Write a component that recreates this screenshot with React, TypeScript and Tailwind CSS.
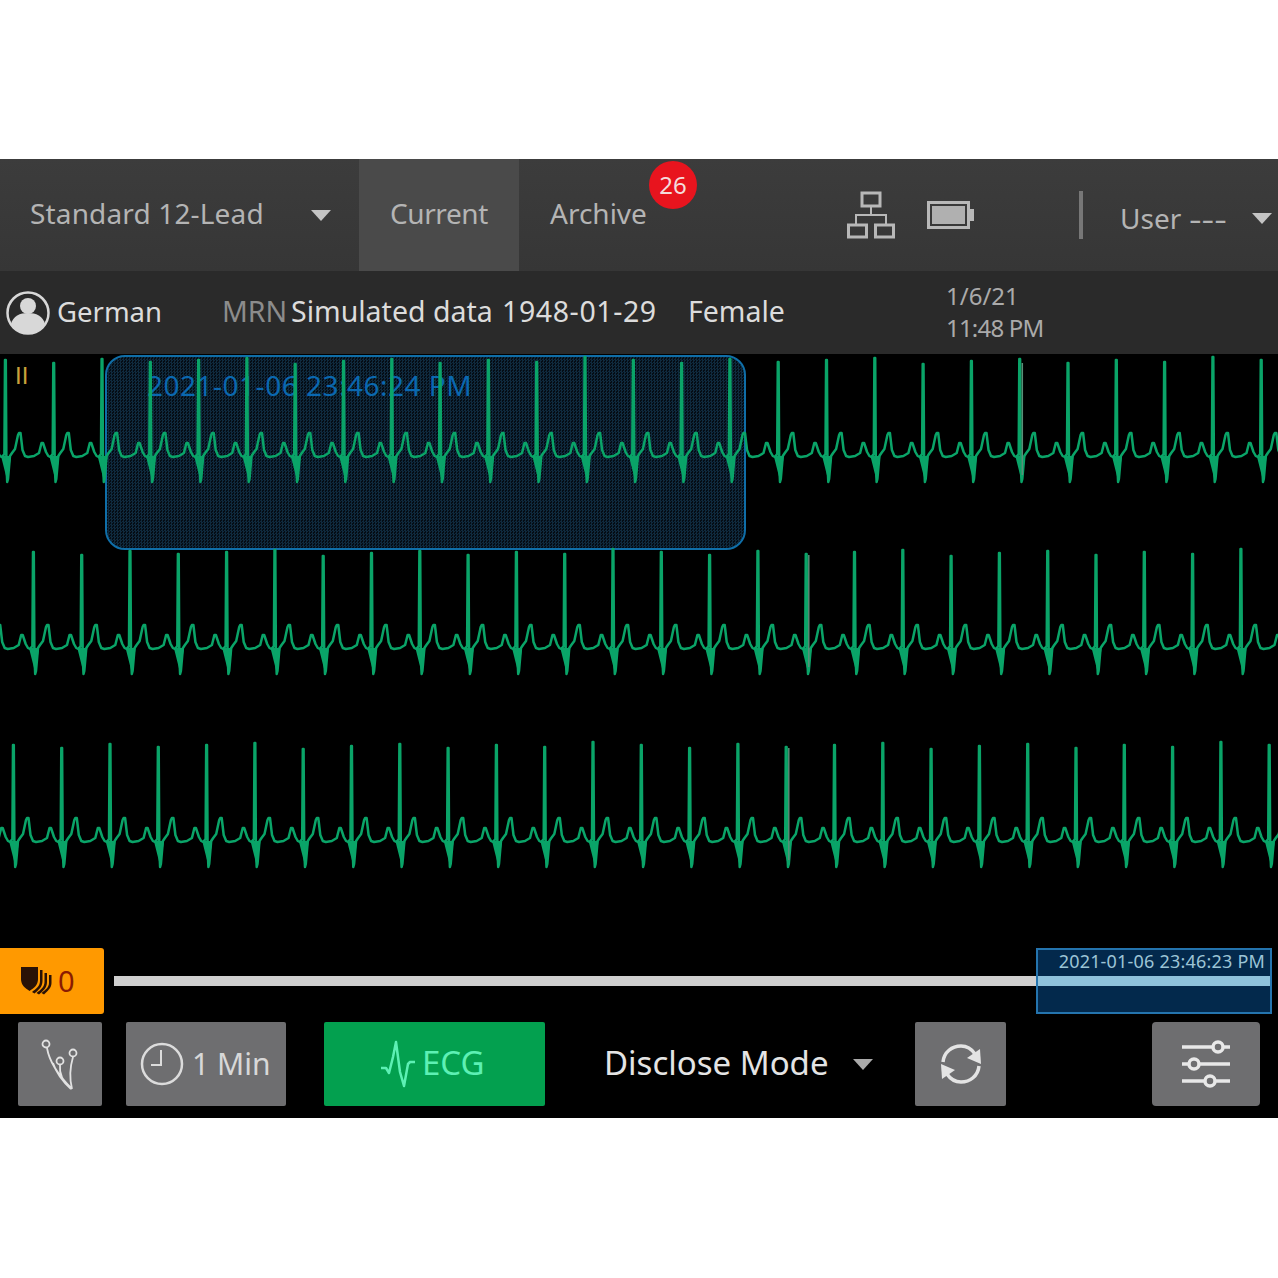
import React from "react";

// one heartbeat, offsets from the R peak: [dx, dy from baseline]
const BEAT: [number, number][] = [
  [-5, 1],
  [-3, 2],
  [-0.6, -1],
  [0, -95],
  [0.8, -95],
  [1.4, 8],
  [2.2, 27],
  [3, 24],
  [5, 1],
  [7, -2],
  [10, -6],
  [13, -20],
  [14, -22],
  [15.5, -22],
  [17.5, -5],
  [20, 1],
  [23, 2],
  [29, 1],
  [34, -2],
  [36.5, -12],
  [38, -12],
  [41, -3],
];

const PERIOD = 48.3;
const JITTER = [0, 3, -1, 2, 0, -2, 4, 1, -1, 3, 0, 2, -3];

function tracePath(start: number, baseline: number) {
  let d = "";
  for (let k = -1; k < 28; k++) {
    const rx = start + k * PERIOD;
    const lift = JITTER[(k + 13) % 13];
    BEAT.forEach(([dx, dy]) => {
      const y = dy < -50 ? dy + lift : dy;
      d += `${d ? "L" : "M"}${(rx + dx).toFixed(1)} ${baseline + y} `;
    });
  }
  return d;
}

// the thick wedge of the S wave under each R peak
function wedgePath(start: number, baseline: number) {
  let d = "";
  for (let k = -1; k < 28; k++) {
    const rx = start + k * PERIOD;
    d += `M${(rx - 4).toFixed(1)} ${baseline + 1}L${(rx + 6).toFixed(1)} ${baseline + 1}L${(rx + 2.5).toFixed(1)} ${baseline + 27}Z `;
  }
  return d;
}

const ROWS = [
  { start: 5, baseline: 101, extra: 21 },
  { start: 33, baseline: 293, extra: 16 },
  { start: 13, baseline: 486, extra: 16 },
];

function Caret({ className }: { className: string }) {
  return (
    <svg className={className} viewBox="0 0 20 11" fill="currentColor">
      <path d="M0 0h20L10 11z" />
    </svg>
  );
}

function NetworkIcon() {
  return (
    <svg className="w-[48px] h-[48px]" viewBox="0 0 48 48" fill="none" stroke="#b8b8b8" strokeWidth="3">
      <rect x="15" y="2" width="18" height="13" />
      <path d="M24 15v9M9 34v-10h30v10" strokeWidth="2" />
      <rect x="1.5" y="34" width="18" height="12" />
      <rect x="28.5" y="34" width="18" height="12" />
    </svg>
  );
}

function BatteryIcon() {
  return (
    <svg className="w-[48px] h-[28px]" viewBox="0 0 48 28">
      <rect x="1.5" y="1.5" width="40" height="25" fill="none" stroke="#b8b8b8" strokeWidth="3" />
      <rect x="5" y="5" width="33" height="18" fill="#b0b0b0" />
      <rect x="43" y="8" width="4" height="12" fill="#b8b8b8" />
    </svg>
  );
}

function AvatarIcon() {
  return (
    <svg className="w-[44px] h-[44px]" viewBox="0 0 44 44">
      <circle cx="22" cy="22" r="20.5" fill="none" stroke="#d8d8d8" strokeWidth="2.5" />
      <circle cx="22" cy="15" r="8" fill="#d8d8d8" />
      <path d="M5 33c2-8 9-11 17-11s15 3 17 11c-4 6-10 10-17 10S9 39 5 33z" fill="#d8d8d8" />
    </svg>
  );
}

function ShieldsIcon() {
  return (
    <svg className="w-[32px] h-[30px]" viewBox="0 0 32 30" fill="#2a1206">
      <path d="M1 1h17v12c0 6-4 9-8.500 12C5 22 1 19 1 13z" />
      <path d="M20 4h2.500v11c0 6-4 9-8 12.500l-2.500-1.500c4-3 8-6 8-11z" />
      <path d="M24.500 7H27v9c0 6-4 9-8 12.500L16.500 27c4-3 8-6 8-11z" />
      <path d="M29 9h2.500v8c0 5-4 8-7.500 11.500L21.500 27c4-3 7.500-6 7.500-10z" />
    </svg>
  );
}

function LeadsIcon() {
  return (
    <svg className="w-[40px] h-[56px]" viewBox="0 0 40 56" fill="none" stroke="#e2e2e2" strokeWidth="1.800">
      <circle cx="6" cy="8" r="3.500" />
      <circle cx="33" cy="17" r="3.500" />
      <circle cx="20" cy="25" r="3.500" />
      <path d="M7 12c2 12 10 26 25 41M20 29c-1 9 3 17 11 24M33 21c-3 10-4 20-1 32M13 27c3 9 9 18 18 26" />
    </svg>
  );
}

function ClockIcon() {
  return (
    <svg className="w-[44px] h-[44px]" viewBox="0 0 44 44" fill="none" stroke="#dcdcdc">
      <circle cx="22" cy="22" r="20" strokeWidth="2.500" />
      <path d="M21 8v15H11" strokeWidth="2" />
    </svg>
  );
}

function WaveIcon() {
  return (
    <svg className="w-[36px] h-[48px]" viewBox="0 0 36 48" fill="none" stroke="#5df0b4" strokeWidth="2.500" strokeLinejoin="round">
      <path d="M1 28l5 0 3 5 4-16 3-15 4 30 4 14 4-22 2-2 5 0" />
    </svg>
  );
}

function RefreshIcon() {
  return (
    <svg className="w-[42px] h-[40px]" viewBox="0 0 42 40" fill="none" stroke="#e4e4e4" strokeWidth="3.500">
      <path d="M3 18C4 8 12 2 21 2c6 0 10 2 14 8" />
      <path d="M39 22c-1 10-9 16-18 16-6 0-10-2-14-8" />
      <path d="M41 20l-1-15-13 9z" fill="#e4e4e4" stroke="none" />
      <path d="M1 20l1 15 13-9z" fill="#e4e4e4" stroke="none" />
    </svg>
  );
}

function SlidersIcon() {
  return (
    <svg className="w-[50px] h-[48px]" viewBox="0 0 50 48" fill="none" stroke="#e8e8e8" strokeWidth="3.500">
      <path d="M1 7h30M43 7h6M1 24h6M19 24h30M1 41h22M35 41h14" />
      <circle cx="37" cy="7" r="5" />
      <circle cx="13" cy="24" r="5" />
      <circle cx="29" cy="41" r="5" />
    </svg>
  );
}

export default function App() {
  return (
    <div className="w-[1278px] h-[1278px] bg-white pt-[159px] font-['Noto_Sans',sans-serif] overflow-hidden">
      <div className="h-[959px] flex flex-col bg-black">
        {/* Top bar */}
        <div className="h-[112px] flex items-stretch bg-gradient-to-b from-[#3c3c3c] to-[#363636] text-[#b4b4b4] text-[28px]">
          <div className="w-[359px] flex items-center pl-[30px]">
            <span className="w-[281px] pb-[4px] tracking-[0.15px]">Standard 12-Lead</span>
            <Caret className="w-[20px] h-[11px] text-[#c4c4c4]" />
          </div>
          <div className="w-[160px] flex items-center justify-center bg-[#4a4a4a] pb-[4px] tracking-[-0.4px]">Current</div>
          <div className="relative w-[328px] flex items-center pl-[31px] pb-[4px]">
            <span>Archive</span>
            <span className="absolute left-[130px] top-[2px] w-[48px] h-[48px] rounded-full bg-[#e8141e] text-[#f4dcdc] text-[24px] flex items-center justify-center">
              26
            </span>
          </div>
          <div className="w-[80px] flex items-center">
            <NetworkIcon />
          </div>
          <div className="w-[152px] flex items-center">
            <BatteryIcon />
          </div>
          <div className="w-[41px] flex items-center">
            <div className="w-[4px] h-[48px] bg-[#777777]" />
          </div>
          <div className="flex items-center">
            <span className="w-[132px] pt-[6px] whitespace-nowrap">
              User <span className="inline-block origin-left scale-x-[1.4]">---</span>
            </span>
            <Caret className="w-[20px] h-[11px] text-[#c4c4c4] mt-[6px]" />
          </div>
        </div>

        {/* Patient bar */}
        <div className="h-[83px] flex items-center bg-[#2a2a2a] text-[#dcdcdc] text-[28.5px] pl-[6px]">
          <AvatarIcon />
          <span className="ml-[7px] w-[165px] pb-[2px] text-[27.500px]">German</span>
          <span className="w-[69px] text-[#8c8c8c] pb-[2px]">MRN</span>
          <span className="w-[211px] pb-[2px] whitespace-nowrap">Simulated data</span>
          <span className="w-[186px] pb-[2px] tracking-[0.6px]">1948-01-29</span>
          <span className="w-[258px] pb-[2px]">Female</span>
          <div className="text-[24px] leading-[32px] text-[#aaaaaa] pb-[1px]">
            <div>1/6/21</div>
            <div className="tracking-[-0.8px]">11:48 PM</div>
          </div>
        </div>

        {/* Waveforms */}
        <div className="relative flex-1 bg-black">
          <div className="absolute left-[105px] top-[1px] w-[641px] h-[195px] rounded-[20px] border-2 border-[#0f6ea8] bg-[#050c14] bg-[repeating-conic-gradient(#0f2a3e_0%_25%,transparent_0%_50%)] bg-[length:3px_3px] pl-[40px] pt-[7px] text-[28px] tracking-[0.5px] text-[#0a68b0]">
            2021-01-06 23:46:24 PM
          </div>
          <span className="absolute left-[15px] top-[8px] text-[24px] leading-[28px] text-[#c9a13a] font-['Liberation_Sans',sans-serif]">
            II
          </span>
          <svg className="relative block w-full h-full" viewBox="0 0 1278 594" fill="none" stroke="#0aa468" strokeWidth="2.500" strokeLinejoin="round">
            {ROWS.map((r) => (
              <g key={r.start}>
                <path d={wedgePath(r.start, r.baseline)} fill="#0aa468" stroke="none" />
                <path d={tracePath(r.start, r.baseline)} />
                <path
                  d={`M${r.start + r.extra * PERIOD + 3} ${r.baseline - 92}V${r.baseline + 20}`}
                  strokeWidth="1.500"
                  stroke="#5a8f78"
                />
              </g>
            ))}
          </svg>
        </div>

        {/* Timeline */}
        <div className="h-[66px] flex items-center">
          <div className="w-[104px] h-[66px] rounded-r-[3px] bg-[#ff9900] flex items-center pl-[20px] gap-[6px] text-[#8a1c02] text-[29px]">
            <ShieldsIcon />
            <span>0</span>
          </div>
          <div className="flex-1 h-[10px] ml-[10px] bg-[#cfcfcf]" />
          <div className="w-[236px] h-[66px] mr-[6px] border-2 border-[#2474ae] bg-[#03294c] flex flex-col">
            <div className="h-[26px] text-[18px] leading-[22px] tracking-[0.2px] text-[#9cc4d6] text-right pr-[5px] whitespace-nowrap">
              2021-01-06 23:46:23 PM
            </div>
            <div className="h-[10px] bg-[#8fc2dc]" />
          </div>
        </div>

        {/* Controls */}
        <div className="h-[104px] flex pt-[8px] pb-[12px] pl-[18px] text-[#d8d8d8] text-[30px]">
          <div className="w-[84px] rounded-[2px] bg-[#6e6e70] flex items-center justify-center">
            <LeadsIcon />
          </div>
          <div className="w-[160px] ml-[24px] rounded-[2px] bg-[#6e6e70] flex items-center pl-[14px] gap-[8px]">
            <ClockIcon />
            <span className="pb-[2px]">1 Min</span>
          </div>
          <div className="w-[221px] ml-[38px] rounded-[2px] bg-[#03a04f] flex items-center pl-[56px] gap-[6px] text-[#5df0b4] text-[33px]">
            <WaveIcon />
            <span className="pb-[2px]">ECG</span>
          </div>
          <div className="w-[311px] ml-[59px] flex items-center text-[#e4e4e4] text-[33px]">
            <span className="w-[249px] pb-[2px] whitespace-nowrap">Disclose Mode</span>
            <Caret className="w-[20px] h-[11px] text-[#aaaaaa]" />
          </div>
          <div className="w-[91px] rounded-[2px] bg-[#6e6e70] flex items-center justify-center">
            <RefreshIcon />
          </div>
          <div className="w-[108px] ml-[146px] rounded-[4px] bg-[#6e6e70] flex items-center justify-center">
            <SlidersIcon />
          </div>
        </div>
      </div>
    </div>
  );
}
